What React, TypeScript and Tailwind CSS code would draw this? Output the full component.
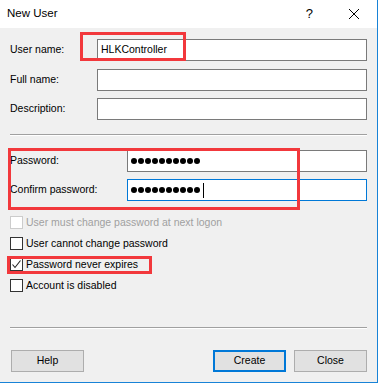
import React from "react";

const font = { fontFamily: '"Liberation Sans", Arial, sans-serif' };

const Field = ({
  label,
  value,
  boxWidth,
  focused = false,
  className = "",
}: {
  label: string;
  value?: React.ReactNode;
  boxWidth: string;
  focused?: boolean;
  className?: string;
}) => (
  <div className={`flex items-center justify-between ${className}`}>
    <span className="text-[10.5px] text-black">{label}</span>
    <div
      className={`${boxWidth} h-[22px] bg-white border flex items-center pl-[3px] ${
        focused ? "border-[#0078d7]" : "border-[#7a7a7a]"
      }`}
    >
      {value}
    </div>
  </div>
);

const Dots = ({ caret = false }: { caret?: boolean }) => (
  <div className="flex items-center gap-[1.5px]">
    {Array.from({ length: 10 }).map((_, i) => (
      <span key={i} className="w-[5.5px] h-[5.5px] rounded-full bg-black" />
    ))}
    {caret && <span className="ml-[2px] w-px h-[15px] bg-black" />}
  </div>
);

const Check = ({
  label,
  checked = false,
  disabled = false,
}: {
  label: string;
  checked?: boolean;
  disabled?: boolean;
}) => (
  <div className="h-[21px] flex items-center gap-[3px]">
    <span
      className={`w-[13px] h-[13px] border bg-white flex items-center justify-center ${
        disabled ? "border-[#cccccc]" : "border-[#333333]"
      }`}
    >
      {checked && (
        <svg width="11" height="11" viewBox="0 0 11 11">
          <path d="M1.5 5.5 L4 8.5 L9.5 1.5" fill="none" stroke="#222" strokeWidth="1.1" />
        </svg>
      )}
    </span>
    <span className={`text-[10.5px] ${disabled ? "text-[#a0a0a0]" : "text-black"}`}>{label}</span>
  </div>
);

const Separator = ({ className = "" }: { className?: string }) => (
  <div className={`mx-[10px] ${className}`}>
    <div className="h-px bg-[#a0a0a0]" />
    <div className="h-px bg-white" />
  </div>
);

const Button = ({ label, primary = false }: { label: string; primary?: boolean }) => (
  <div
    className={`w-[73px] h-[22px] bg-[#e1e1e1] flex items-center justify-center text-[10.5px] text-black ${
      primary ? "border-2 border-[#0078d7]" : "border border-[#adadad]"
    }`}
  >
    {label}
  </div>
);

export default function App() {
  return (
    <div className="w-[380px] h-[385px] bg-white" style={font}>
      <div className="relative w-[378px] h-[383px] border-r border-b border-[#1883d7] bg-[#f0f0f0] flex flex-col">
        <div className="h-[28px] bg-white flex items-center pl-[7px] shrink-0">
          <span className="text-[11.5px] text-black">New User</span>
          <span className="ml-auto mr-[36px] text-[13px] text-black">?</span>
          <svg className="mr-[18px]" width="10" height="10" viewBox="0 0 10 10">
            <path d="M0 0 L10 10 M10 0 L0 10" stroke="#000" strokeWidth="1" />
          </svg>
        </div>

        <div className="flex flex-col pt-[11px]">
          <div className="pl-[10px] pr-[10px] flex flex-col">
            <Field
              label="User name:"
              boxWidth="w-[270px]"
              value={<span className="text-[10.5px] text-black">HLKController</span>}
            />
            <Field label="Full name:" boxWidth="w-[270px]" className="mt-[8px]" />
            <Field label="Description:" boxWidth="w-[270px]" className="mt-[7px]" />
          </div>

          <Separator className="mt-[14px]" />

          <div className="pl-[10px] pr-[10px] flex flex-col mt-[14px]">
            <Field label="Password:" boxWidth="w-[240px]" value={<Dots />} />
            <Field
              label="Confirm password:"
              boxWidth="w-[240px]"
              focused
              className="mt-[7px]"
              value={<Dots caret />}
            />
          </div>

          <div className="pl-[10px] flex flex-col mt-[11px]">
            <Check label="User must change password at next logon" disabled />
            <Check label="User cannot change password" />
            <Check label="Password never expires" checked />
            <Check label="Account is disabled" />
          </div>

          <Separator className="mt-[31px]" />

          <div className="flex items-center pl-[11px] pr-[10px] mt-[21px]">
            <Button label="Help" />
            <div className="ml-auto flex gap-[8px]">
              <Button label="Create" primary />
              <Button label="Close" />
            </div>
          </div>
        </div>

        <div className="absolute left-[80px] top-[32px] w-[106px] h-[29px] border-[3px] border-[#f2383c]" />
        <div className="absolute left-[8px] top-[148px] w-[292px] h-[62px] border-[3px] border-[#f2383c]" />
        <div className="absolute left-[7px] top-[256px] w-[145px] h-[18px] border-[3px] border-[#f2383c]" />
      </div>
    </div>
  );
}
